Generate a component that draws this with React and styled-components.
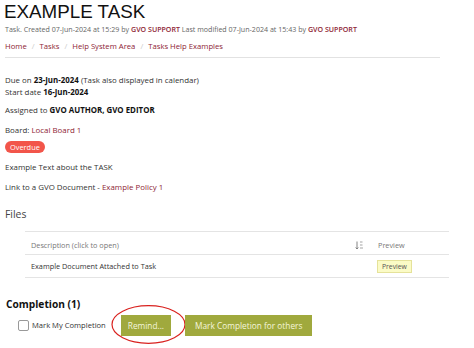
import React from "react";
import styled, { createGlobalStyle } from "styled-components";

const Global = createGlobalStyle`
  html, body { margin: 0; padding: 0; background: #fff; }
  body { font-family: "Open Sans", "Liberation Sans", sans-serif; color: #333; }
`;

const Page = styled.div`
  width: 474px;
  height: 348px;
  overflow: hidden;
  padding: 0 0 0 5px;
  box-sizing: border-box;
`;

const Title = styled.h1`
  margin: 0;
  padding-top: 1px;
  font-family: "Liberation Sans", Arial, sans-serif;
  font-weight: 400;
  font-size: 18.8px;
  line-height: 22px;
  color: #111;
  margin-left: -1px;
`;

const Meta = styled.div`
  margin-top: 1px;
  font-size: 7.1px;
  line-height: 10px;
  color: #666;
`;

const Red = styled.span`
  color: #8e2434;
  font-weight: ${(p) => (p.$bold ? 600 : 400)};
`;

const Crumbs = styled.nav`
  margin-top: 7px;
  width: 435px;
  padding-bottom: 5px;
  border-bottom: 1px solid #e2e2e2;
  display: flex;
  gap: 5px;
  font-size: 7.7px;
  line-height: 11px;
`;

const Sep = styled.span`
  color: #ccc;
`;

const Details = styled.div`
  margin-top: 16px;
  font-size: 7.9px;
  line-height: 12px;
  color: #333;
`;

const P = styled.p`
  margin: 0 0 ${(p) => p.$mb ?? 8}px 0;
`;

const B = styled.b`
  font-weight: 700;
  color: #111;
`;

const Badge = styled.span`
  display: inline-block;
  background: #f2554a;
  color: #fff;
  border-radius: 7px;
  padding: 0 5px;
  font-size: 7.4px;
  line-height: 12px;
`;

const FilesTitle = styled.h2`
  margin: 14px 0 0 0;
  font-weight: 400;
  font-size: 10.4px;
  line-height: 14px;
  color: #444;
`;

const Table = styled.div`
  margin: 10px 0 0 20px;
  width: 424px;
  border-top: 1px solid #e4e4e4;
  font-size: 7.3px;
`;

const Row = styled.div`
  display: grid;
  grid-template-columns: 1fr 20px 74px;
  align-items: center;
  height: ${(p) => p.$h}px;
  box-sizing: border-box;
  padding-top: ${(p) => (p.$head ? 4 : 0)}px;
  border-bottom: 1px solid #e4e4e4;
  padding-left: 6px;
  color: ${(p) => (p.$head ? "#777" : "#333")};
`;

const PreviewBtn = styled.span`
  justify-self: start;
  margin-left: 2px;
  background: #fbfbc6;
  border: 1px solid #e5e29a;
  color: #555;
  font-size: 6.8px;
  line-height: 11px;
  padding: 0 4px;
`;

const HeadPreview = styled.span`
  margin-left: 3px;
`;

const CompTitle = styled.h3`
  margin: 19px 0 0 1px;
  font-size: 10.2px;
  line-height: 14px;
  font-weight: 700;
  color: #111;
`;

const CompRow = styled.div`
  margin-top: 3px;
  display: flex;
  align-items: center;
  padding-left: 13px;
  height: 22px;
`;

const Check = styled.span`
  width: 9px;
  height: 9px;
  border: 1px solid #999;
  border-radius: 2px;
  background: #fff;
  margin-right: 3px;
`;

const Label = styled.span`
  font-size: 7.6px;
  color: #333;
  margin-right: 15px;
`;

const Btn = styled.span`
  position: relative;
  background: #a0a93d;
  color: #f4f6dc;
  font-size: 8.3px;
  height: 21px;
  display: inline-flex;
  align-items: center;
  padding: 0 ${(p) => p.$px}px;
  margin-right: ${(p) => p.$mr || 0}px;
`;

const Ring = styled.svg`
  position: absolute;
  left: -10px;
  top: -10px;
  overflow: visible;
  pointer-events: none;
`;

export default function App() {
  return (
    <>
      <Global />
      <Page>
        <Title>EXAMPLE TASK</Title>
        <Meta>
          Task. Created 07-Jun-2024 at 15:29 by <Red $bold>GVO SUPPORT</Red> Last modified 07-Jun-2024 at 15:43 by{" "}
          <Red $bold>GVO SUPPORT</Red>
        </Meta>
        <Crumbs>
          <Red>Home</Red>
          <Sep>/</Sep>
          <Red>Tasks</Red>
          <Sep>/</Sep>
          <Red>Help System Area</Red>
          <Sep>/</Sep>
          <Red>Tasks Help Examples</Red>
        </Crumbs>
        <Details>
          <P $mb={0}>
            Due on <B>23-Jun-2024</B> (Task also displayed in calendar)
          </P>
          <P $mb={6}>
            Start date <B>16-Jun-2024</B>
          </P>
          <P>
            Assigned to <B>GVO AUTHOR, GVO EDITOR</B>
          </P>
          <P $mb={5}>
            Board: <Red>Local Board 1</Red>
          </P>
          <P $mb={8}>
            <Badge>Overdue</Badge>
          </P>
          <P>Example Text about the TASK</P>
          <P $mb={0}>
            Link to a GVO Document - <Red>Example Policy 1</Red>
          </P>
        </Details>
        <FilesTitle>Files</FilesTitle>
        <Table>
          <Row $head $h={23}>
            <span>Description (click to open)</span>
            <svg width="9" height="9" viewBox="0 0 9 9">
              <path d="M2 0.5v7.5M0.7 6.5L2 8l1.3-1.5" stroke="#777" strokeWidth="0.9" fill="none" />
              <path d="M5 1h2.5M5 4h2.5M5 7h3" stroke="#999" strokeWidth="0.9" />
            </svg>
            <HeadPreview>Preview</HeadPreview>
          </Row>
          <Row $h={23}>
            <span>Example Document Attached to Task</span>
            <span />
            <PreviewBtn>Preview</PreviewBtn>
          </Row>
        </Table>
        <CompTitle>Completion (1)</CompTitle>
        <CompRow>
          <Check />
          <Label>Mark My Completion</Label>
          <Btn $px={7} $mr={14}>
            Remind...
            <Ring width="75" height="39" viewBox="0 0 75 39">
              <ellipse cx="37.5" cy="19.5" rx="36.5" ry="18.8" fill="none" stroke="#d9221f" strokeWidth="1.2" />
            </Ring>
          </Btn>
          <Btn $px={10}>Mark Completion for others</Btn>
        </CompRow>
      </Page>
    </>
  );
}
